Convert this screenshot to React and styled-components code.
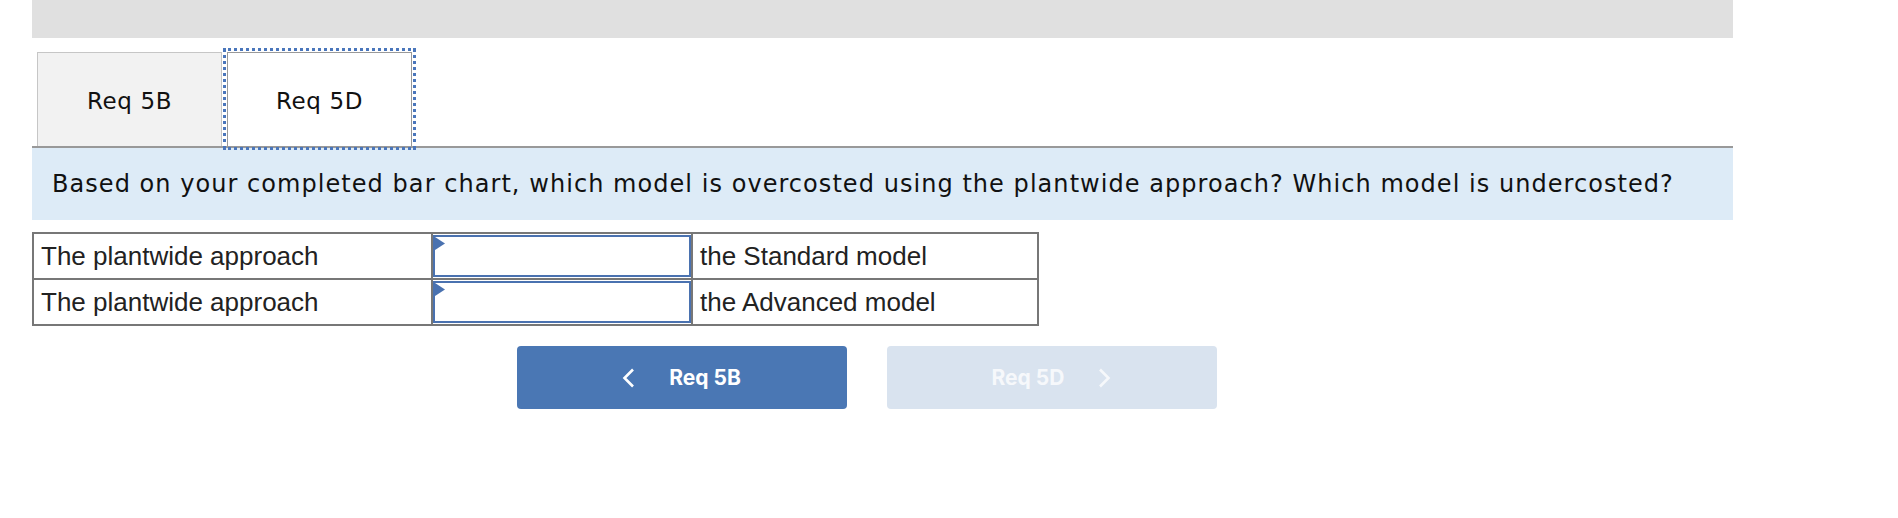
import React from 'react';
import styled, { createGlobalStyle } from 'styled-components';

const GlobalStyle = createGlobalStyle`
  body {
    margin: 0;
    background: #fff;
  }
`;

const Page = styled.div`
  padding-left: 32px;
  width: 1701px;
`;

const TopBar = styled.div`
  height: 38px;
  background: #e0e0e0;
`;

const TabRow = styled.div`
  display: flex;
  gap: 5px;
  margin-top: 14px;
  padding-left: 5px;
  border-bottom: 2px solid #999;
`;

const Tab = styled.button`
  display: flex;
  align-items: center;
  justify-content: center;
  width: ${({ $width }) => $width}px;
  height: 94px;
  margin: 0;
  padding: 2px 0 0;
  border: 1px solid ${({ $active }) => ($active ? '#999' : '#c6c6c6')};
  border-bottom: none;
  background: ${({ $active }) => ($active ? '#fff' : '#f2f2f2')};
  color: #111;
  font-family: 'DejaVu Sans', Verdana, sans-serif;
  font-size: 23px;
  letter-spacing: 0.6px;
  outline: ${({ $active }) => ($active ? '3px dotted #4a76bb' : 'none')};
  outline-offset: 1px;
  cursor: pointer;
`;

const Question = styled.div`
  display: flex;
  align-items: center;
  height: 72px;
  padding-left: 20px;
  background: #ddebf7;
  color: #111;
  font-family: 'DejaVu Sans', Verdana, sans-serif;
  font-size: 24px;
  letter-spacing: 1.05px;
  white-space: nowrap;
`;

const Table = styled.table`
  margin-top: 12px;
  border-collapse: collapse;
  border: 2px solid #777;
`;

const Cell = styled.td`
  width: ${({ $width }) => $width}px;
  height: 44px;
  padding: ${({ $input }) => ($input ? '0' : '0 7px')};
  border: 2px solid #777;
  color: #222;
  font-family: 'Liberation Sans', Arial, sans-serif;
  font-size: 26px;
  vertical-align: middle;
  white-space: nowrap;
`;

const InputWrap = styled.div`
  position: relative;
  height: 42px;
  border: 2px solid #4a72b0;
  box-sizing: border-box;
  background: #fff;
`;

const Flag = styled.svg`
  position: absolute;
  left: 0;
  top: 0;
`;

const Nav = styled.div`
  display: flex;
  justify-content: center;
  gap: 40px;
  margin-top: 20px;
  padding-right: 32px;
`;

const NavButton = styled.button`
  display: flex;
  align-items: center;
  justify-content: center;
  gap: 34px;
  width: 330px;
  height: 63px;
  border: none;
  border-radius: 4px;
  background: ${({ $disabled }) => ($disabled ? '#d9e3ef' : '#4a77b4')};
  color: ${({ $disabled }) => ($disabled ? '#f6f8fb' : '#fff')};
  font-family: Inter, Roboto, 'Liberation Sans', sans-serif;
  font-weight: 700;
  font-size: 21px;
  cursor: ${({ $disabled }) => ($disabled ? 'default' : 'pointer')};
`;

const Chevron = ({ dir }) => (
  <svg width="13" height="20" viewBox="0 0 13 20">
    <polyline
      points={dir === 'left' ? '11,1.5 2.5,10 11,18.5' : '2,1.5 10.5,10 2,18.5'}
      fill="none"
      stroke="currentColor"
      strokeWidth="2.6"
    />
  </svg>
);

const InputCell = () => (
  <InputWrap>
    <Flag width="11" height="14" viewBox="0 0 11 14">
      <polygon points="0,0 10,6.5 0,13" fill="#4a72b0" />
    </Flag>
  </InputWrap>
);

const rows = [
  { left: 'The plantwide approach', right: 'the Standard model' },
  { left: 'The plantwide approach', right: 'the Advanced model' },
];

export default function App() {
  return (
    <>
      <GlobalStyle />
      <Page>
        <TopBar />
        <TabRow>
          <Tab $width={185}>Req 5B</Tab>
          <Tab $width={185} $active>Req 5D</Tab>
        </TabRow>
        <Question>
          Based on your completed bar chart, which model is overcosted using the plantwide approach? Which model is undercosted?
        </Question>
        <Table>
          <tbody>
            {rows.map((row, i) => (
              <tr key={i}>
                <Cell $width={383}>{row.left}</Cell>
                <Cell $width={258} $input>
                  <InputCell />
                </Cell>
                <Cell $width={330}>{row.right}</Cell>
              </tr>
            ))}
          </tbody>
        </Table>
        <Nav>
          <NavButton>
            <Chevron dir="left" />
            <span>Req 5B</span>
          </NavButton>
          <NavButton $disabled>
            <span>Req 5D</span>
            <Chevron dir="right" />
          </NavButton>
        </Nav>
      </Page>
    </>
  );
}
